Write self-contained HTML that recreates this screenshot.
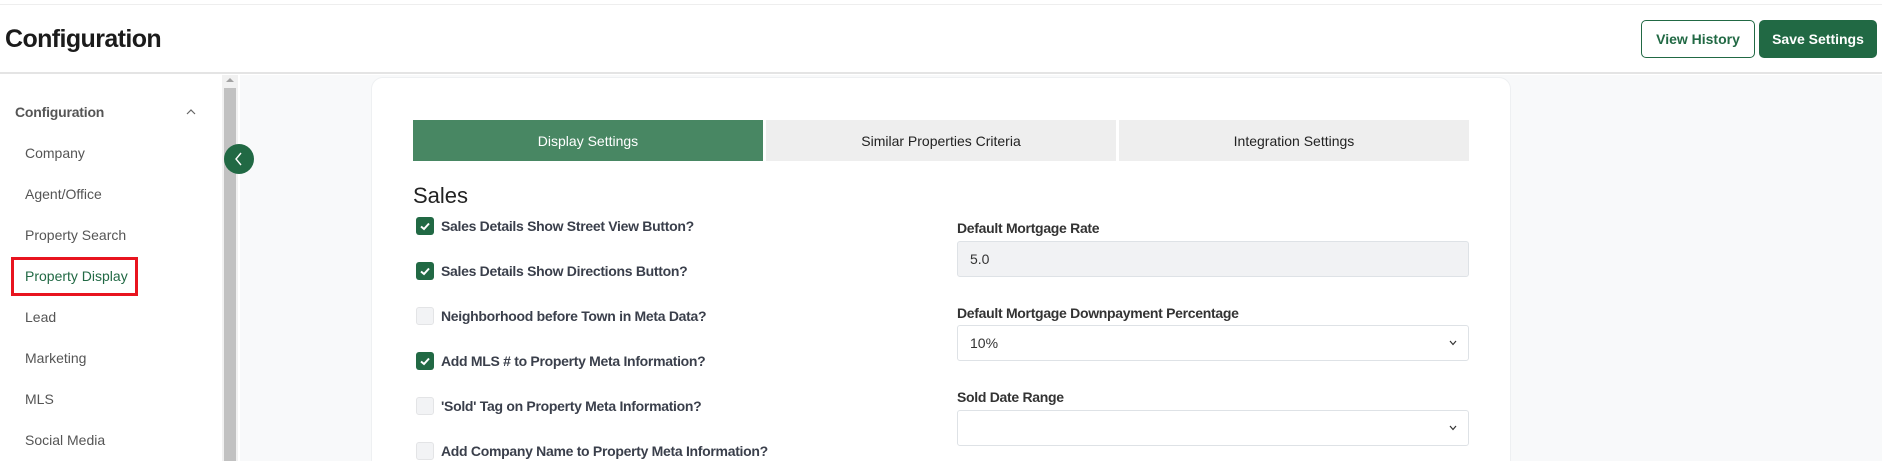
<!DOCTYPE html>
<html><head><meta charset="utf-8"><style>
*{box-sizing:border-box;margin:0;padding:0}
html{overflow:hidden;width:1882px;height:461px}
body{width:1882px;height:461px;overflow:hidden;background:#fff;font-family:"Liberation Sans",sans-serif;position:relative;color:#333}
.a{position:absolute}
.hdr{left:0;width:1882px;border-top:1px solid #eee;border-bottom:2px solid #e4e4e4;top:4px;height:70px}
.title{left:5px;top:25px;font-size:25px;color:#1b1b1b;font-weight:bold;letter-spacing:-0.6px}
.btn{top:20px;height:38px;border-radius:5px;font-size:14px;font-weight:bold;display:flex;align-items:center;justify-content:center}
.side{left:0;top:75px;width:222px;height:386px;background:#fff}
.si{left:25px;font-size:14px;color:#555}
.main{left:240px;top:75px;width:1642px;height:386px;background:#f8f9fa}
.card{left:371px;top:77px;width:1140px;height:384px;background:#fff;border-radius:12px 12px 0 0;border:1px solid #eef0f2;border-bottom:none}
.tab{top:120px;height:41px;font-size:14px;display:flex;align-items:center;justify-content:center}
.cb{left:416px;width:18px;height:18px;border-radius:3px}
.on{background:#216944}
.off{background:#f2f3f5;border:1px solid #e3e4e6}
.lb{left:441px;font-size:14px;color:#3a3f4b;font-weight:600;letter-spacing:-0.3px}
.rl{left:957px;font-size:14px;color:#333;font-weight:600;letter-spacing:-0.3px}
.inp{left:957px;width:512px;height:36px;border:1px solid #dee2e6;border-radius:3px;font-size:14px;padding:0 12px;display:flex;align-items:center}
</style></head><body>
<div class="a hdr"></div>
<div class="a title">Configuration</div>
<div class="a btn" style="left:1641px;width:114px;border:1px solid #216944;color:#216944;background:#fff">View History</div>
<div class="a btn" style="left:1759px;width:118px;background:#216944;color:#fff">Save Settings</div>
<div class="a side"></div>
<div class="a" style="left:222px;top:75px;width:16px;height:386px;background:#f1f1f1"></div>
<div class="a" style="left:224px;top:88px;width:12px;height:373px;background:#c1c1c1"></div>
<div class="a" style="left:226px;top:78px;width:0;height:0;border-left:4px solid transparent;border-right:4px solid transparent;border-bottom:4px solid #a3a3a3"></div>
<div class="a main"></div>
<div class="a si" style="left:15px;top:104px;color:#555;font-weight:600;letter-spacing:-0.2px">Configuration</div>
<svg class="a" style="left:186px;top:108px" width="10" height="8"><path d="M1 6 L5 2 L9 6" fill="none" stroke="#666" stroke-width="1.2"/></svg>
<div class="a si" style="top:145px">Company</div>
<div class="a si" style="top:186px">Agent/Office</div>
<div class="a si" style="top:227px">Property Search</div>
<div class="a" style="left:11px;top:257px;width:127px;height:39px;border:3px solid #e8141f"></div>
<div class="a si" style="top:268px;color:#216944">Property Display</div>
<div class="a si" style="top:309px">Lead</div>
<div class="a si" style="top:350px">Marketing</div>
<div class="a si" style="top:391px">MLS</div>
<div class="a si" style="top:432px">Social Media</div>
<div class="a" style="left:224px;top:144px;width:30px;height:30px;border-radius:50%;background:#216944"></div>
<svg class="a" style="left:233px;top:151px" width="12" height="16"><path d="M8 2 L3 8 L8 14" fill="none" stroke="#fff" stroke-width="1.4"/></svg>
<div class="a card"></div>
<div class="a tab" style="left:413px;width:350px;background:#488763;color:#fff">Display Settings</div>
<div class="a tab" style="left:766px;width:350px;background:#eeeeee;color:#222">Similar Properties Criteria</div>
<div class="a tab" style="left:1119px;width:350px;background:#eeeeee;color:#222">Integration Settings</div>
<div class="a" style="left:413px;top:183px;font-size:22px;color:#222">Sales</div>
<div class="a cb on" style="top:217px"></div>
<div class="a cb on" style="top:262px"></div>
<div class="a cb off" style="top:307px"></div>
<div class="a cb on" style="top:352px"></div>
<div class="a cb off" style="top:397px"></div>
<div class="a cb off" style="top:442px"></div>
<svg class="a" style="left:416px;top:217px" width="18" height="18"><path d="M5 9.5 L8 12 L13 6.5" fill="none" stroke="#fff" stroke-width="2"/></svg>
<svg class="a" style="left:416px;top:262px" width="18" height="18"><path d="M5 9.5 L8 12 L13 6.5" fill="none" stroke="#fff" stroke-width="2"/></svg>
<svg class="a" style="left:416px;top:352px" width="18" height="18"><path d="M5 9.5 L8 12 L13 6.5" fill="none" stroke="#fff" stroke-width="2"/></svg>
<div class="a lb" style="top:218px">Sales Details Show Street View Button?</div>
<div class="a lb" style="top:263px">Sales Details Show Directions Button?</div>
<div class="a lb" style="top:308px">Neighborhood before Town in Meta Data?</div>
<div class="a lb" style="top:353px">Add MLS # to Property Meta Information?</div>
<div class="a lb" style="top:398px">'Sold' Tag on Property Meta Information?</div>
<div class="a lb" style="top:443px">Add Company Name to Property Meta Information?</div>
<div class="a rl" style="top:220px">Default Mortgage Rate</div>
<div class="a inp" style="top:241px;background:#f1f2f4">5.0</div>
<div class="a rl" style="top:305px">Default Mortgage Downpayment Percentage</div>
<div class="a inp" style="top:325px;background:#fff">10%</div>
<div class="a rl" style="top:389px">Sold Date Range</div>
<div class="a inp" style="top:410px;background:#fff"></div>
<svg class="a" style="left:1449px;top:340px" width="8" height="6"><path d="M1 1 L4 4.5 L7 1" fill="none" stroke="#333" stroke-width="1.2"/></svg>
<svg class="a" style="left:1449px;top:425px" width="8" height="6"><path d="M1 1 L4 4.5 L7 1" fill="none" stroke="#333" stroke-width="1.2"/></svg>
</body></html>
